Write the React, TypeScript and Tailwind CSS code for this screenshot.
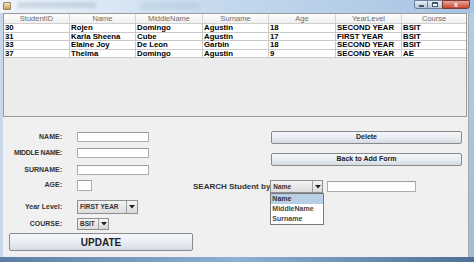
import { useState } from "react";

const rows = [
  ["30", "Rojen", "Domingo", "Agustin", "18", "SECOND YEAR", "BSIT"],
  ["31", "Karla Sheena", "Cube", "Agustin", "17", "FIRST YEAR", "BSIT"],
  ["33", "Elaine Joy", "De Leon", "Garbin", "18", "SECOND YEAR", "BSIT"],
  ["37", "Thelma", "Domingo", "Agustin", "9", "SECOND YEAR", "AE"],
];

const headers = ["StudentID", "Name", "MiddleName", "Surname", "Age", "YearLevel", "Course"];

// little down arrow used by every combo box
const Arrow = () => (
  <svg width="6" height="4" viewBox="0 0 6 4">
    <path d="M0 0h6L3 3.5z" fill="#222" />
  </svg>
);

const Combo = ({ value, w, bw }: { value: string; w: string; bw: string }) => (
  <div className={`flex h-full ${w} border border-[#8e8f8f] bg-white`}>
    <div className="flex-1 flex items-center pl-[2px] text-[6.5px] font-bold text-[#333] bg-gradient-to-b from-[#f4f4f4] to-[#dcdcdc]">
      {value}
    </div>
    <div className={`${bw} flex items-center justify-center border-l border-[#a0a0a0] bg-gradient-to-b from-[#f6f6f6] to-[#d8d8d8]`}>
      <Arrow />
    </div>
  </div>
);

const Field = ({ w }: { w: string }) => (
  <div className={`h-full ${w} bg-white border border-[#abadb3] border-t-[#9a9a9a]`} />
);

const Button = ({ label, className }: { label: string; className: string }) => (
  <div
    className={`flex items-center justify-center border border-[#8a8a8a] rounded-[2px] bg-gradient-to-b from-[#f5f7fa] via-[#e9eef3] to-[#d4dbe3] font-bold text-[#1c1c1c] ${className}`}
  >
    {label}
  </div>
);

export default function App() {
  const [search] = useState("Name");

  return (
    <div
      className="w-[474px] h-[262px] overflow-hidden flex flex-col bg-gradient-to-r from-[#c6d8ea] via-[#a9c6e4] to-[#b7cfe6]"
      style={{ fontFamily: '"Liberation Sans", Arial, sans-serif' }}
    >
      {/* title bar */}
      <div className="h-[13px] flex items-start bg-gradient-to-r from-[#eef4fa] via-[#c2d7ec] to-[#a7c3e3]">
        <div className="mt-[2px] ml-[3px] w-[8px] h-[8px] rounded-[1px] bg-gradient-to-b from-[#f3e6c5] to-[#c59d5d] border border-[#9c8458]" />
        <div className="ml-[6px] mt-[2px] h-[6px] w-[80px] rounded-full bg-[#9eb3c8] opacity-40 blur-[1.5px]" />
        <div className="ml-[42px] mt-[3px] h-[6px] w-[60px] rounded-full bg-[#9ab1c8] opacity-30 blur-[2px]" />
        <div className="flex-1" />
        <div className="flex mr-[4px]">
          <div className="w-[14px] h-[9px] border border-[#6b7f96] rounded-bl-[3px] bg-gradient-to-b from-[#e8eef6] to-[#b4c5d9] flex items-center justify-center">
            <div className="w-[5px] h-[2px] bg-white border border-[#44566b] mt-[2px]" />
          </div>
          <div className="w-[14px] h-[9px] border-y border-[#6b7f96] bg-gradient-to-b from-[#e8eef6] to-[#b4c5d9] flex items-center justify-center">
            <div className="w-[6px] h-[5px] border border-[#44566b] border-t-2 bg-white" />
          </div>
          <div className="w-[28px] h-[9px] border border-[#7a3a32] rounded-br-[3px] bg-gradient-to-b from-[#e9a597] to-[#c7432f] flex items-center justify-center text-white text-[7px] font-bold leading-none">
            x
          </div>
        </div>
      </div>

      <div className="flex flex-1">
        <div className="w-[3px]" />
        <div className="flex-1 flex flex-col bg-[#f0f0f0] border-r border-[#a6a6a6]">
          {/* table scroll pane */}
          <div className="h-[104px] mr-[1px] border border-[#9a9a9a] bg-[#ececec] flex flex-col">
            <div className="grid grid-cols-[66px_66px_67px_66px_67px_66px_1fr] h-[10px] bg-gradient-to-b from-[#fdfdfd] to-[#f0f0f0] border-b border-[#cfcfcf]">
              {headers.map((h, i) => (
                <div
                  key={h}
                  className={`flex items-center justify-center text-[7.5px] leading-none text-[#6e6e6e] ${i < 6 ? "border-r border-[#d5d5d5]" : ""}`}
                >
                  {h}
                </div>
              ))}
            </div>
            {rows.map((r) => (
              <div
                key={r[0]}
                className="grid grid-cols-[66px_66px_67px_66px_67px_66px_1fr] h-[8.5px] bg-white border-b border-[#c9c9c9]"
              >
                {r.map((c, i) => (
                  <div
                    key={i}
                    className={`flex items-center pl-[1px] text-[7.8px] leading-[7px] font-bold text-black whitespace-nowrap ${i < 6 ? "border-r border-[#c9c9c9]" : ""}`}
                  >
                    {c}
                  </div>
                ))}
              </div>
            ))}
          </div>

          {/* form area */}
          <div className="flex flex-1 pt-[15px]">
            {/* left column */}
            <div className="w-[200px] flex flex-col">
              <div className="flex h-[10px] items-center">
                <div className="w-[59px] text-right text-[7px] font-bold text-[#333]">NAME:</div>
                <div className="ml-[15px] h-full flex"><Field w="w-[72px]" /></div>
              </div>
              <div className="flex h-[10px] items-center mt-[6px]">
                <div className="w-[59px] text-right text-[7px] font-bold text-[#333] whitespace-nowrap tracking-[-0.3px]">MIDDLE NAME:</div>
                <div className="ml-[15px] h-full flex"><Field w="w-[72px]" /></div>
              </div>
              <div className="flex h-[10px] items-center mt-[7px]">
                <div className="w-[59px] text-right text-[7px] font-bold text-[#333]">SURNAME:</div>
                <div className="ml-[15px] h-full flex"><Field w="w-[72px]" /></div>
              </div>
              <div className="flex h-[11px] items-center mt-[5px]">
                <div className="w-[59px] text-right text-[7px] font-bold text-[#333]">AGE:</div>
                <div className="ml-[15px] h-full flex"><Field w="w-[15px]" /></div>
              </div>
              <div className="flex h-[14px] items-center mt-[9px]">
                <div className="w-[59px] text-right text-[7px] font-bold text-[#333]">Year Level:</div>
                <div className="ml-[15px] h-full flex"><Combo value="FIRST YEAR" w="w-[61px]" bw="w-[11px]" /></div>
              </div>
              <div className="flex h-[12px] items-center mt-[4px]">
                <div className="w-[59px] text-right text-[7px] font-bold text-[#333]">COURSE:</div>
                <div className="ml-[15px] h-full flex"><Combo value="BSIT" w="w-[32px]" bw="w-[10px]" /></div>
              </div>
              <div className="ml-[6px] mt-[3px] h-[18px] flex">
                <Button label="UPDATE" className="w-[184px] text-[10px] text-[#222]" />
              </div>
            </div>

            {/* right column */}
            <div className="flex-1 flex flex-col">
              <div className="flex justify-end pr-[6px] -mt-[1px]">
                <Button label="Delete" className="w-[191px] h-[13px] text-[7px]" />
              </div>
              <div className="flex justify-end pr-[6px] mt-[9px]">
                <Button label="Back to Add Form" className="w-[191px] h-[13px] text-[7px]" />
              </div>
              <div className="flex h-[13px] items-center mt-[14px] ml-[-10px]">
                <div className="text-[8px] font-bold text-[#333] whitespace-nowrap">SEARCH Student by</div>
                <div className="relative h-full flex">
                  <Combo value={search} w="w-[53px]" bw="w-[10px]" />
                  <div className="absolute left-0 top-[13px] w-[54px] border border-[#7a7a7a] bg-white flex flex-col text-[7px] font-bold text-[#444]">
                    <div className="h-[10px] flex items-center pl-[1px] bg-[#b8cfe5] text-[#333]">Name</div>
                    <div className="h-[10px] flex items-center pl-[1px]">MiddleName</div>
                    <div className="h-[10px] flex items-center pl-[1px]">Surname</div>
                  </div>
                </div>
                <div className="ml-[4px] h-[11px] flex"><Field w="w-[89px]" /></div>
              </div>
            </div>
          </div>
          <div className="h-[4px]" />
        </div>
        <div className="w-[5px] bg-gradient-to-b from-[#b5cde6] to-[#9fbcdc]" />
      </div>
      <div className="h-[5px] bg-gradient-to-r from-[#5d7fa6] via-[#8fb0d3] to-[#4f6f95]" />
    </div>
  );
}
